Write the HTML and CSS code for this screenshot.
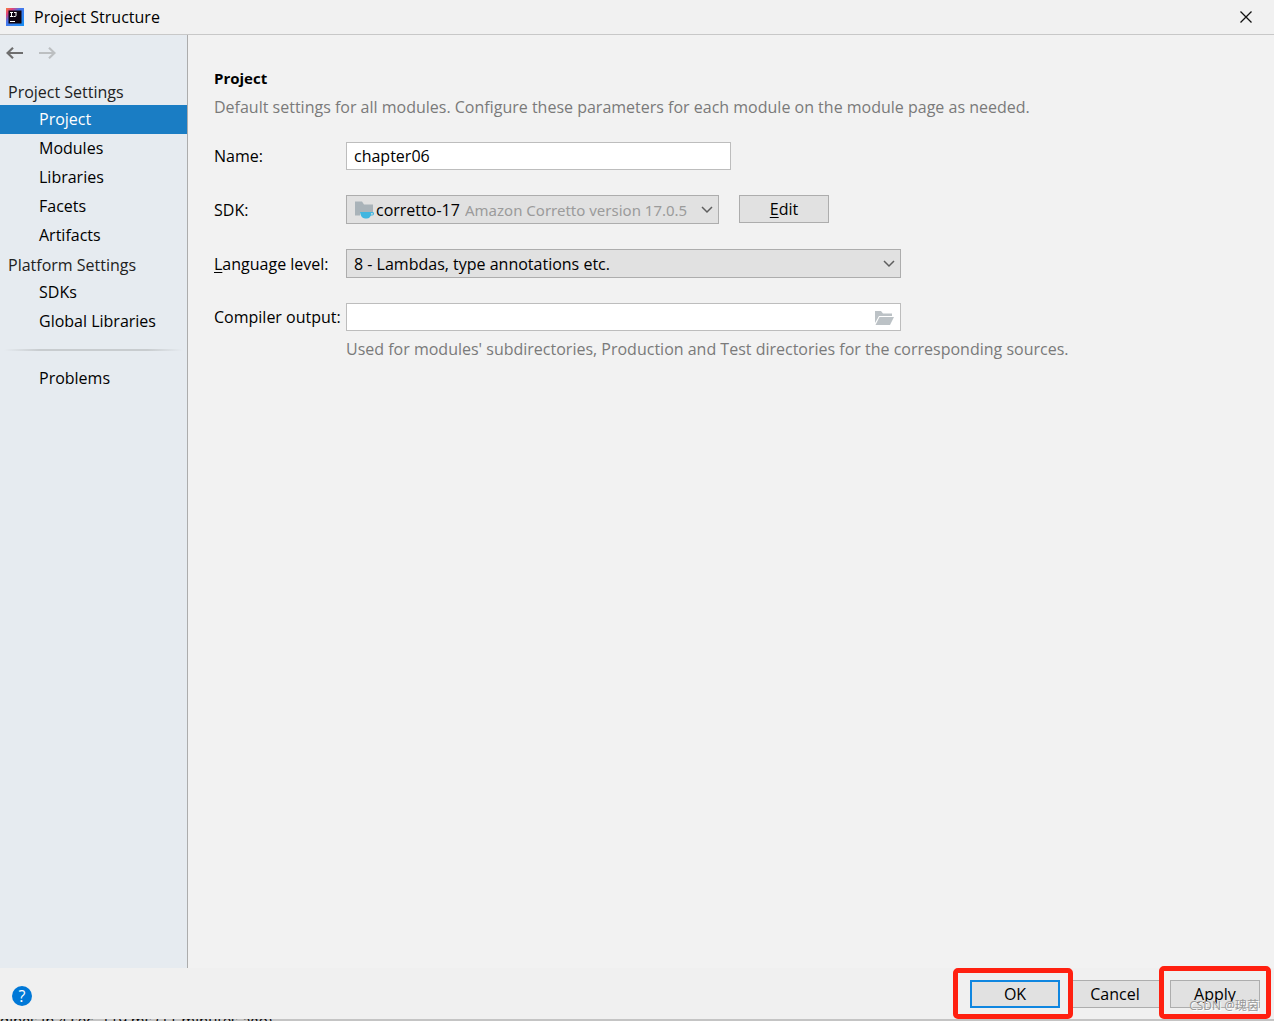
FILE: index.html
```html
<!DOCTYPE html>
<html lang="en">
<head>
    <meta charset="UTF-8">
    <meta name="viewport" content="width=device-width, initial-scale=1.0">
    <title>Project Structure</title>
    <link rel="stylesheet" href="styles.css">
</head>
<body>
    <header class="titlebar">
        <svg class="app-icon" width="18" height="18" viewBox="0 0 18 18">
            <defs>
                <linearGradient id="logo" x1="0" y1="0" x2="1" y2="1">
                    <stop offset="0" stop-color="#f9803c"/>
                    <stop offset="0.2" stop-color="#e0417c"/>
                    <stop offset="0.4" stop-color="#4a76ea"/>
                    <stop offset="1" stop-color="#1590f5"/>
                </linearGradient>
            </defs>
            <rect width="18" height="18" fill="url(#logo)"/>
            <rect x="2.5" y="2.5" width="13" height="13" fill="#0d0310"/>
            <path d="M4 4.5h3M5.5 4.5v4M4 8.5h3M8 4.5h2.5M10 4.5v3q0 1-1 1H7.5M4 13.5h5" fill="none" stroke="#fff" stroke-width="1"/>
        </svg>
        <h1 class="window-title">Project Structure</h1>
        <button class="close" type="button" aria-label="Close">
            <svg width="12" height="12" viewBox="0 0 12 12"><path d="M0.5 0.5l11 11M11.5 0.5l-11 11" stroke="#111" stroke-width="1.3"/></svg>
        </button>
    </header>

    <div class="content">
        <aside class="sidebar">
            <div class="history">
                <button type="button" aria-label="Back">
                    <svg width="17" height="12" viewBox="0 0 17 12"><path d="M1.5 6H17M7 0.8L1.5 6L7 11.2" fill="none" stroke="#6e6e6e" stroke-width="2.2"/></svg>
                </button>
                <button type="button" aria-label="Forward" disabled>
                    <svg width="17" height="12" viewBox="0 0 17 12"><path d="M0 6h15.5M10 0.8L15.5 6L10 11.2" fill="none" stroke="#bcbfc1" stroke-width="2.2"/></svg>
                </button>
            </div>
            <nav>
                <h2 class="group">Project Settings</h2>
                <a class="item active" href="#">Project</a>
                <a class="item" href="#">Modules</a>
                <a class="item" href="#">Libraries</a>
                <a class="item" href="#">Facets</a>
                <a class="item" href="#">Artifacts</a>
                <h2 class="group">Platform Settings</h2>
                <a class="item" href="#">SDKs</a>
                <a class="item" href="#">Global Libraries</a>
                <hr class="separator">
                <a class="item" href="#">Problems</a>
            </nav>
        </aside>

        <main class="main">
            <h2 class="heading">Project</h2>
            <p class="muted">Default settings for all modules. Configure these parameters for each module on the module page as needed.</p>

            <form class="form">
                <label for="name">Name:</label>
                <input class="field name" id="name" type="text" value="chapter06">

                <label for="sdk">SDK:</label>
                <div class="sdk-row">
                    <div class="combo sdk">
                        <select id="sdk">
                            <option>corretto-17</option>
                        </select>
                        <svg class="sdk-icon" width="20" height="18" viewBox="0 0 20 18">
                            <path d="M0 0.5h7l2 3h9v8H5v3H0z" fill="#a9b3b9"/>
                            <path d="M5 11h12.5q2 0 1.5 2t-3 1.5q-1.5 3-4 3h-2q-4 0-5-6.5z" fill="#40b6e0"/>
                            <path d="M16 12.3h1.8v1.2H16z" fill="#e1e1e1"/>
                        </svg>
                        <span class="sdk-version">Amazon Corretto version 17.0.5</span>
                        <svg class="chevron" width="12" height="8" viewBox="0 0 12 8"><path d="M1 1l5 5l5-5" fill="none" stroke="#5e5e5e" stroke-width="1.5"/></svg>
                    </div>
                    <button class="btn" type="button"><u>E</u>dit</button>
                </div>

                <label for="level"><u>L</u>anguage level:</label>
                <div class="combo">
                    <select id="level">
                        <option>8 - Lambdas, type annotations etc.</option>
                    </select>
                    <svg class="chevron" width="12" height="8" viewBox="0 0 12 8"><path d="M1 1l5 5l5-5" fill="none" stroke="#5e5e5e" stroke-width="1.5"/></svg>
                </div>

                <label for="output">Compiler output:</label>
                <div class="output">
                    <input class="field" id="output" type="text">
                    <button class="browse" type="button" aria-label="Browse">
                        <svg width="19" height="14" viewBox="0 0 19 14">
                            <path d="M0 0h6l2 2.5h9V5H4L0 12z" fill="#bcc2c6"/>
                            <path d="M4.5 6H19l-4 8H0.5z" fill="#bcc2c6"/>
                        </svg>
                    </button>
                </div>
                <p class="muted hint">Used for modules' subdirectories, Production and Test directories for the corresponding sources.</p>
            </form>
        </main>
    </div>

    <footer class="footer">
        <button class="help" type="button" aria-label="Help">?</button>
        <div class="actions">
            <div class="marked marked-ok"><button class="btn default" type="button">OK</button></div>
            <button class="btn" type="button">Cancel</button>
            <div class="marked marked-apply">
                <button class="btn" type="button"><u>A</u>pply</button>
                <span class="watermark">CSDN @瑰茵</span>
            </div>
        </div>
    </footer>
    <div class="status"><span>dings in 4 sec, 119 ms (11 minutes ago)</span></div>
</body>
</html>
```

FILE: styles.css
```css
* {
    margin: 0;
    padding: 0;
    box-sizing: border-box;
}

body {
    display: flex;
    flex-direction: column;
    height: 100vh;
    overflow: hidden;
    background: #f2f2f2;
    color: #000;
    font-family: 'Open Sans', 'Noto Sans CJK SC', sans-serif;
    font-size: 16px;
    line-height: 20px;
}

button,
input,
select {
    font: inherit;
    color: inherit;
}

button {
    border: none;
    background: none;
}

u {
    text-underline-offset: 2px;
}

/* Title bar */
.titlebar {
    display: flex;
    align-items: center;
    gap: 10px;
    height: 35px;
    padding: 0 22px 0 6px;
    border-bottom: 1px solid #c8c8c8;
    background: #f1f1f1;
}

.window-title {
    flex: 1;
    font-size: 16px;
    font-weight: 400;
}

.close {
    display: flex;
}

.content {
    display: flex;
    flex: 1;
    min-height: 0;
}

/* Sidebar */
.sidebar {
    width: 188px;
    border-right: 1px solid #acacac;
    background: #e6ebf0;
}

.history {
    display: flex;
    gap: 16px;
    padding: 12px 6px 18px;
}

.history button {
    display: flex;
}

.group {
    padding: 5px 8px 3px;
    font-size: 16px;
    font-weight: 400;
    color: #222;
}

.item {
    display: block;
    padding-left: 39px;
    line-height: 29px;
    color: #000;
    text-decoration: none;
}

.item.active {
    background: #1a7dc4;
    color: #fff;
}

.separator {
    height: 2px;
    margin: 13px 4px;
    border: none;
    background: linear-gradient(to right, transparent, #c8cccf 20%, #c8cccf 80%, transparent);
}

/* Settings form */
.main {
    flex: 1;
    padding: 33px 26px;
}

.heading {
    margin-bottom: 9px;
    font-size: 15px;
    font-weight: 700;
}

.muted {
    color: #7a7a7a;
}

.form {
    display: grid;
    grid-template-columns: 132px 555px;
    align-items: center;
    row-gap: 25px;
    margin-top: 25px;
}

.field {
    width: 100%;
    height: 28px;
    padding: 0 7px;
    border: 1px solid #bdbdbd;
    background: #fff;
}

.field.name {
    width: 385px;
}

.sdk-row {
    display: flex;
    gap: 20px;
}

.combo {
    position: relative;
}

.combo select {
    display: block;
    width: 100%;
    height: 29px;
    padding: 0 7px;
    border: 1px solid #adadad;
    border-radius: 0;
    background: #e1e1e1;
    appearance: none;
}

.combo.sdk {
    width: 373px;
}

.combo.sdk select {
    padding-left: 29px;
}

.sdk-icon,
.sdk-version,
.chevron {
    position: absolute;
    pointer-events: none;
}

.sdk-icon {
    left: 9px;
    top: 6px;
}

.sdk-version {
    left: 119px;
    right: 26px;
    top: 5px;
    overflow: hidden;
    white-space: nowrap;
    font-family: 'Noto Sans', sans-serif;
    font-size: 15px;
    color: #9b9b9b;
}

.chevron {
    right: 6px;
    top: 11px;
}

.btn {
    width: 90px;
    height: 28px;
    border: 1px solid #adadad;
    background: #e1e1e1;
}

.btn.default {
    border: 2px solid #0f86e0;
}

.output {
    position: relative;
}

.browse {
    position: absolute;
    right: 7px;
    top: 8px;
    display: flex;
}

.hint {
    grid-column: 2;
    margin-top: -17px;
    white-space: nowrap;
}

/* Bottom bar */
.footer {
    display: flex;
    align-items: center;
    justify-content: space-between;
    height: 51px;
    padding: 0 14px 0 12px;
    background: #f0f0f0;
}

.help {
    width: 20px;
    height: 20px;
    margin-top: 5px;
    border-radius: 50%;
    background: #0078d7;
    color: #fff;
}

.actions {
    display: flex;
    gap: 10px;
}

.marked {
    position: relative;
}

.marked::after {
    content: '';
    position: absolute;
    border: 5px solid #ff2010;
    border-radius: 5px;
    pointer-events: none;
}

.marked-ok::after {
    inset: -12px -13px -11px -17px;
}

.marked-apply::after {
    inset: -14px -11px -11px -11px;
}

.watermark {
    position: absolute;
    right: 1px;
    bottom: -6px;
    font-size: 12px;
    line-height: 16px;
    white-space: nowrap;
    color: #999;
    text-shadow: 1px 1px 0 #fff;
}

.status {
    height: 2px;
    overflow: hidden;
    background: #c4c4c4;
}

.status span {
    display: block;
    margin-top: -9px;
    font-size: 15px;
}
```
